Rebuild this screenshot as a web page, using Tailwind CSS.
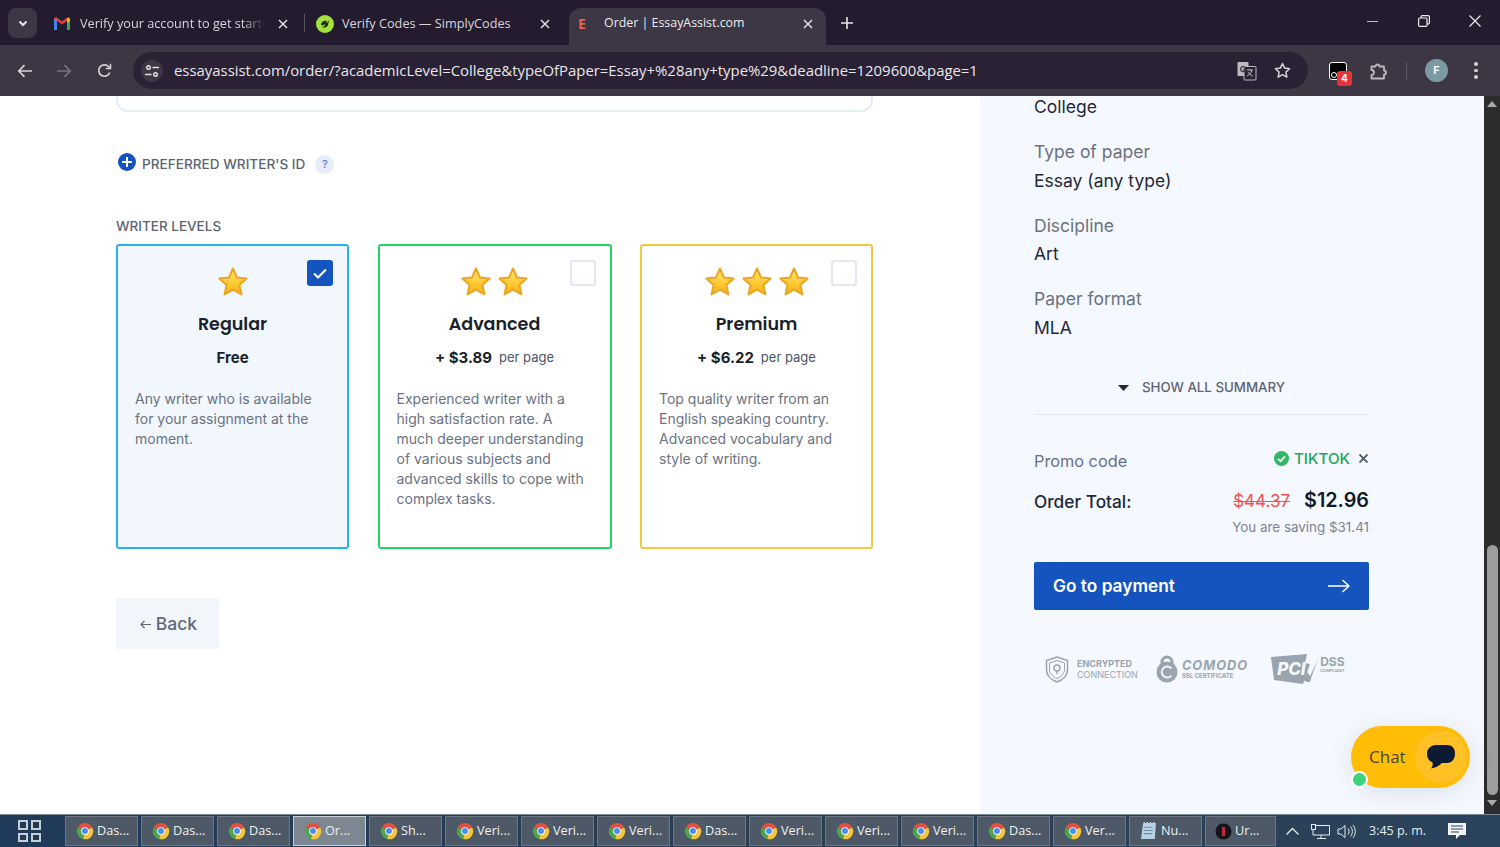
<!DOCTYPE html>
<html lang="en">
<head>
<meta charset="UTF-8">
<title>Order | EssayAssist.com</title>
<script src="https://cdn.jsdelivr.net/npm/@tailwindcss/browser@4"></script>
</head>
<body class="w-[1500px] h-[847px] overflow-hidden bg-white font-['Inter',sans-serif] flex flex-col relative">
<svg class="absolute w-0 h-0">
  <defs>
    <linearGradient id="starFill" x1="0" y1="0" x2="0" y2="1"><stop offset="0" stop-color="#ffe675"/><stop offset="0.6" stop-color="#fdc92f"/><stop offset="1" stop-color="#f4ad1f"/></linearGradient>
    <symbol id="star" viewBox="0 0 32 32"><path d="M16 2.500l4 9 9.600 1-7.200 6.500 2.100 9.500L16 23.600 7.500 28.500l2.100-9.500L2.400 12.500l9.600-1z" fill="url(#starFill)" stroke="#eca522" stroke-width="2" stroke-linejoin="round"/></symbol>
    <symbol id="chrome" viewBox="0 0 20 20">
      <path d="M10 10L2 6a9 9 0 0 1 16 0z" fill="#e2503f"/>
      <path d="M10 10L2 6a9 9 0 0 0 6 13z" fill="#4fa44f"/>
      <path d="M10 10L18 6a9 9 0 0 1-10 13z" fill="#f5c63c"/>
      <circle cx="10" cy="10" r="4.300" fill="#fff"/><circle cx="10" cy="10" r="3.300" fill="#4a8ee8"/>
    </symbol>
  </defs>
</svg>

<!-- tab strip -->
<div class="h-[45px] shrink-0 bg-[#241c2e] flex items-start text-[12.700px] font-['Open_Sans',sans-serif] text-[#d8d4dc]">
  <div class="ml-2 mt-2 w-[29px] h-[30px] rounded-lg bg-[#3c3645] flex items-center justify-center">
    <svg width="12" height="12" viewBox="0 0 12 12" fill="none" stroke="#e8e6ea" stroke-width="2"><path d="M2.500 4.500L6 8l3.500-3.500"/></svg>
  </div>
  <div class="ml-[17px] mt-[14px] flex items-center w-[250px]">
    <svg width="16" height="13" viewBox="0 0 16 13"><path d="M0 13V1.500L3 1v12z" fill="#4285f4"/><path d="M13 13V1l3 .5V13z" fill="#34a853"/><path d="M0 1.500L8 7.500l8-6L14 0 8 4.500 2 0z" fill="#ea4335"/><path d="M13 1l3 .5V4l-3 2z" fill="#fbbc05"/></svg>
    <span class="ml-[10px] w-[185px] overflow-hidden whitespace-nowrap [mask-image:linear-gradient(to_right,black_88%,transparent)]">Verify your account to get started</span>
    <svg class="ml-[13px]" width="10" height="10" viewBox="0 0 10 10" stroke="#e0dde4" stroke-width="1.500"><path d="M1 1l8 8M9 1l-8 8"/></svg>
  </div>
  <div class="mt-[14px] w-px h-[18px] bg-[#5a5463]"></div>
  <div class="ml-[11px] mt-[14px] flex items-center w-[253px]">
    <svg width="18" height="18" viewBox="0 0 18 18"><circle cx="9" cy="9" r="9" fill="#a4e13c"/><path d="M5 10c0-3 3-5 6-4-1 1-1 2 0 2l2-3-1 5c-1 3-5 3-6 2 2 0 3-1 3-3-1 1-3 2-4 1z" fill="#1d2a12"/></svg>
    <span class="ml-2 w-[190px] whitespace-nowrap">Verify Codes — SimplyCodes</span>
    <svg class="ml-[8px]" width="10" height="10" viewBox="0 0 10 10" stroke="#e0dde4" stroke-width="1.500"><path d="M1 1l8 8M9 1l-8 8"/></svg>
  </div>
  <div class="mt-2 w-[257px] h-[37px] bg-[#3c3645] rounded-t-xl flex items-center pl-[9px] pb-[6px] text-[#eeecf0]">
    <span class="w-[26px] text-[#e8644a] font-bold text-[14px]">E</span>
    <span class="w-[199px] whitespace-nowrap text-[12.400px]">Order | EssayAssist.com</span>
    <svg width="10" height="10" viewBox="0 0 10 10" stroke="#e0dde4" stroke-width="1.500"><path d="M1 1l8 8M9 1l-8 8"/></svg>
  </div>
  <svg class="ml-[15px] mt-[17px]" width="12" height="12" viewBox="0 0 12 12" stroke="#e8e6ea" stroke-width="1.600"><path d="M6 0v12M0 6h12"/></svg>
  <div class="ml-auto mt-[15px] flex items-center">
    <div class="w-[11px] h-px bg-[#c4bfcb] mr-[40px]"></div>
    <svg class="mr-[39px]" width="12" height="12" viewBox="0 0 12 12" fill="none" stroke="#eeecf0" stroke-width="1.200"><rect x="0.600" y="3" width="8.400" height="8.400" rx="1.200"/><path d="M3 3V1.800A1.200 1.200 0 0 1 4.200.6h6A1.200 1.200 0 0 1 11.400 1.800v6A1.200 1.200 0 0 1 10.200 9H9"/></svg>
    <svg class="mr-[19px]" width="12" height="12" viewBox="0 0 12 12" stroke="#eeecf0" stroke-width="1.200"><path d="M.5.500l11 11M11.500.500l-11 11"/></svg>
  </div>
</div>

<!-- toolbar -->
<div class="h-[51px] shrink-0 bg-[#3c3645] flex items-center text-[#d8d4dc]">
  <svg class="ml-[17px]" width="15" height="14" viewBox="0 0 15 14" fill="none" stroke="#d6d2da" stroke-width="1.700"><path d="M15 7H2M7.500 1.200L1.800 7l5.700 5.800"/></svg>
  <svg class="ml-[25px]" width="15" height="14" viewBox="0 0 15 14" fill="none" stroke="#787280" stroke-width="1.700"><path d="M0 7h13M7.500 1.200L13.200 7l-5.700 5.800"/></svg>
  <svg class="ml-[25px]" width="15" height="15" viewBox="0 0 15 15" fill="none" stroke="#d6d2da" stroke-width="1.700"><path d="M12.800 9.500A5.700 5.700 0 1 1 11.500 3.500L13 5"/><path d="M13.500 .8v4.700H8.800" stroke-width="1.500"/></svg>
  <div class="ml-[21px] w-[1175px] h-[37px] rounded-full bg-[#2a2234] flex items-center">
    <div class="ml-2 w-[22px] h-[22px] rounded-full bg-[#3c3645] flex items-center justify-center">
      <svg width="14" height="14" viewBox="0 0 14 14" fill="none" stroke="#e4e1e8" stroke-width="1.400"><circle cx="3.500" cy="3.500" r="1.800"/><circle cx="10.500" cy="10.500" r="1.800"/><path d="M7.500 3.500H14M0 10.500h6.500"/></svg>
    </div>
    <span class="ml-[11px] text-[14.900px] text-[#e9e6ec] font-['Open_Sans',sans-serif] whitespace-nowrap">essayassist.com/order/?academicLevel=College&amp;typeOfPaper=Essay+%28any+type%29&amp;deadline=1209600&amp;page=1</span>
    <svg class="ml-auto" width="20" height="20" viewBox="0 0 20 20"><rect x="0.500" y="1" width="11" height="14" rx="1" fill="#bdb9c2"/><rect x="7" y="5.500" width="12" height="13.500" rx="1" fill="#2a2234" stroke="#bdb9c2"/><path d="M10 9h6M13 8v1M15 9c-.5 3-3 5-5 6M11 11c1 2 3 3.500 5 4" stroke="#bdb9c2" fill="none"/><path d="M8 6.500a2.500 2.500 0 1 0 .5 2.500H6" stroke="#3c3645" stroke-width="1.300" fill="none"/></svg>
    <svg class="ml-[17px] mr-[17px]" width="17" height="17" viewBox="0 0 17 17" fill="none" stroke="#d6d2da" stroke-width="1.500" stroke-linejoin="round"><path d="M8.500 1.500l2.100 4.600 5 .6-3.700 3.400 1 5-4.400-2.500-4.400 2.500 1-5L1.400 6.700l5-.6z"/></svg>
  </div>
  <div class="ml-[21px] relative w-[18px] h-[18px] rounded-[3px] bg-black border border-white">
    <div class="absolute left-[1px] bottom-[1px] w-[6px] h-[6px] rounded-full border border-white"></div>
    <div class="absolute left-[7px] top-[8px] w-[15px] h-[15px] rounded-[3px] bg-[#e5333a] text-white text-[10px] font-bold flex items-center justify-center">4</div>
  </div>
  <svg class="ml-[23px]" width="18" height="18" viewBox="0 0 18 18" fill="none" stroke="#bdb9c2" stroke-width="1.800" stroke-linejoin="round"><path d="M1.500 4.500h4a2 2 0 0 1 4 0h4.500v4a2 2 0 0 1 0 4v4H1.500v-3.500a2 2 0 0 0 0-5z"/></svg>
  <div class="ml-[18px] w-px h-[18px] bg-[#5a5463]"></div>
  <div class="ml-[18px] w-[23px] h-[23px] rounded-full bg-[#7b9aa3] text-white text-[11px] font-semibold flex items-center justify-center">F</div>
  <div class="ml-[26px] flex flex-col gap-[3px]">
    <i class="block w-[3.500px] h-[3.500px] rounded-full bg-[#d6d2da]"></i><i class="block w-[3.500px] h-[3.500px] rounded-full bg-[#d6d2da]"></i><i class="block w-[3.500px] h-[3.500px] rounded-full bg-[#d6d2da]"></i>
  </div>
</div>

<!-- page -->
<div class="h-[718px] shrink-0 flex">
  <main class="w-[980px] pl-[116px] shrink-0">
    <div class="w-[757px]">
      <div class="h-[16px] border-2 border-t-0 border-[#e6ecf6] rounded-b-xl"></div>
      <div class="mt-[42px] ml-[2px] flex items-center h-[20px]">
        <div class="w-[18px] h-[18px] rounded-full bg-[#1554bf] flex items-center justify-center mt-[-5px]">
          <svg width="10" height="10" viewBox="0 0 10 10" stroke="#fff" stroke-width="2"><path d="M5 0v10M0 5h10"/></svg>
        </div>
        <span class="ml-[6px] text-[13.600px] text-[#5c6472] font-medium">PREFERRED WRITER'S ID</span>
        <div class="ml-[10px] w-[19px] h-[19px] rounded-full bg-[#e6ecfa] text-[#5a7ec4] text-[11px] font-medium flex items-center justify-center">?</div>
      </div>
      <div class="mt-[42px] h-[20px] flex items-center text-[13.500px] text-[#5c6472] font-medium">WRITER LEVELS</div>
      <div class="mt-[8px] flex justify-between">
        <!-- regular -->
        <div class="relative w-[233px] h-[305px] rounded-[3px] border-2 border-[#25b3f0] bg-[#f2f7fe] flex flex-col items-center">
          <div class="absolute right-[14px] top-[14px] w-[26px] h-[26px] rounded-[3px] bg-[#1554bf] flex items-center justify-center">
            <svg width="14" height="11" viewBox="0 0 14 11" fill="none" stroke="#fff" stroke-width="2"><path d="M1 5.500l4 4 8-8"/></svg>
          </div>
          <div class="mt-[20px] flex h-[32px] gap-[5px]"><svg class="w-[32px] h-[32px]"><use href="#star"/></svg></div>
          <div class="mt-[11px] h-[30px] flex items-center font-['Poppins','Lato',sans-serif] text-[17.500px] font-semibold text-[#1a1f2b]">Regular</div>
          <div class="mt-[7px] h-[24px] flex items-center text-[15px] font-bold text-[#1a1f2b]">Free</div>
          <p class="mt-[19px] self-start px-[17px] text-[14px] leading-[20px] text-[#6b7280]">Any writer who is available for your assignment at the moment.</p>
        </div>
        <!-- advanced -->
        <div class="relative w-[234px] h-[305px] rounded-[3px] border-2 border-[#24d366] bg-white flex flex-col items-center">
          <div class="absolute right-[14px] top-[14px] w-[26px] h-[26px] rounded-[3px] border-2 border-[#e3e7ef] bg-white"></div>
          <div class="mt-[20px] flex h-[32px] gap-[5px]"><svg class="w-[32px] h-[32px]"><use href="#star"/></svg><svg class="w-[32px] h-[32px]"><use href="#star"/></svg></div>
          <div class="mt-[11px] h-[30px] flex items-center font-['Poppins','Lato',sans-serif] text-[17.500px] font-semibold text-[#1a1f2b]">Advanced</div>
          <div class="mt-[7px] h-[24px] flex items-center text-[15px] font-bold text-[#1a1f2b]">+ $3.89<span class="ml-[7px] text-[13px] font-normal text-[#4b5563]">per page</span></div>
          <p class="mt-[19px] self-start px-[17px] text-[14px] leading-[20px] text-[#6b7280]">Experienced writer with a high satisfaction rate. A much deeper understanding of various subjects and advanced skills to cope with complex tasks.</p>
        </div>
        <!-- premium -->
        <div class="relative w-[233px] h-[305px] rounded-[3px] border-2 border-[#f3c843] bg-white flex flex-col items-center">
          <div class="absolute right-[14px] top-[14px] w-[26px] h-[26px] rounded-[3px] border-2 border-[#e3e7ef] bg-white"></div>
          <div class="mt-[20px] flex h-[32px] gap-[5px]"><svg class="w-[32px] h-[32px]"><use href="#star"/></svg><svg class="w-[32px] h-[32px]"><use href="#star"/></svg><svg class="w-[32px] h-[32px]"><use href="#star"/></svg></div>
          <div class="mt-[11px] h-[30px] flex items-center font-['Poppins','Lato',sans-serif] text-[17.500px] font-semibold text-[#1a1f2b]">Premium</div>
          <div class="mt-[7px] h-[24px] flex items-center text-[15px] font-bold text-[#1a1f2b]">+ $6.22<span class="ml-[7px] text-[13px] font-normal text-[#4b5563]">per page</span></div>
          <p class="mt-[19px] self-start px-[17px] text-[14px] leading-[20px] text-[#6b7280]">Top quality writer from an English speaking country. Advanced vocabulary and style of writing.</p>
        </div>
      </div>
      <div class="mt-[49px] w-[103px] h-[51px] pt-[2px] pl-[2px] rounded-[3px] bg-[#f2f6fb] flex items-center justify-center text-[17.500px] font-medium text-[#5c6a7d]">
        <svg class="mr-[5px]" width="11" height="9" viewBox="0 0 11 9" fill="none" stroke="#5c6a7d" stroke-width="1.200"><path d="M11 4.500H1.500M4.500 1L1 4.500 4.500 8"/></svg>Back
      </div>
    </div>
  </main>

  <aside class="w-[504px] shrink-0 bg-[#f5f8fe] pl-[54px] overflow-hidden">
    <div class="w-[335px] text-[17.500px]">
      <div class="h-[23px] flex items-center text-[#1f2937]">College</div>
      <div class="mt-[19px] h-[28px] flex items-center text-[#6b7280]">Type of paper</div>
      <div class="mt-[1px] h-[29px] flex items-center text-[#1f2937]">Essay (any type)</div>
      <div class="mt-[16px] h-[28px] flex items-center text-[#6b7280]">Discipline</div>
      <div class="h-[29px] flex items-center text-[#1f2937]">Art</div>
      <div class="mt-[16px] h-[28px] flex items-center text-[#6b7280]">Paper format</div>
      <div class="mt-[1px] h-[29px] flex items-center text-[#1f2937]">MLA</div>
      <div class="mt-[35px] h-[20px] flex items-center justify-center text-[13.300px] font-medium text-[#5c6472]">
        <svg class="mr-[13px]" width="11" height="6" viewBox="0 0 11 6"><path d="M0 0h11L5.500 6z" fill="#1f2937"/></svg>SHOW ALL SUMMARY
      </div>
      <div class="mt-[16px] h-px bg-[#e3e7ee]"></div>
      <div class="mt-[33px] flex justify-between items-center h-[26px]">
        <span class="text-[16.300px] text-[#667085]">Promo code</span>
        <div class="flex items-center mt-[-4px]">
          <svg width="15" height="15" viewBox="0 0 15 15"><circle cx="7.500" cy="7.500" r="7.500" fill="#2fb861"/><path d="M4 7.800l2.500 2.400L11 5.300" fill="none" stroke="#fff" stroke-width="1.800"/></svg>
          <span class="ml-[5px] text-[15.200px] font-medium text-[#22a552]">TIKTOK</span>
          <svg class="ml-[9px] mr-[1px]" width="9" height="9" viewBox="0 0 9 9" stroke="#4b5563" stroke-width="1.800"><path d="M.5.500l8 8M8.500.500l-8 8"/></svg>
        </div>
      </div>
      <div class="mt-[14px] flex justify-between items-center h-[28px]">
        <span class="text-[17.300px] font-medium text-[#1f2937]">Order Total:</span>
        <div class="flex items-center">
          <span class="text-[17px] text-[#f0524f] line-through">$44.37</span>
          <span class="ml-[14px] text-[19.800px] font-semibold text-[#111827] mt-[-2px]">$12.96</span>
        </div>
      </div>
      <div class="mt-[1px] h-[20px] flex items-center justify-end text-[13.400px] text-[#7b8494]">You are saving $31.41</div>
      <div class="mt-[25px] h-[48px] rounded-[2px] bg-[#1554bf] flex items-center justify-between pl-[19px] pr-[19px] text-white text-[17.300px] font-semibold">
        <span>Go to payment</span>
        <svg width="22" height="14" viewBox="0 0 22 14" fill="none" stroke="#fff" stroke-width="1.500"><path d="M0 7h21M14.500 1l6.500 6-6.500 6"/></svg>
      </div>
      <div class="mt-[39px] flex items-center h-[32px] text-[#9aa4ae] pt-[8px]">
        <svg class="ml-[11px]" width="24" height="27" viewBox="0 0 24 27" fill="none" stroke="#9aa4ae" stroke-width="1.500"><path d="M12 1l10.500 3.500v9c0 6-5 10.500-10.500 12.500C6.500 24 1.500 19.500 1.500 13.500v-9z"/><path d="M12 4.500l7.500 2.500v6.500c0 4-3.500 7.500-7.500 9-4-1.500-7.500-5-7.500-9V7z" stroke-width="1"/><circle cx="12" cy="12" r="3"/><path d="M12 15v3"/></svg>
        <div class="ml-[8px] flex flex-col text-[9px] leading-[11px]"><span class="font-bold">ENCRYPTED</span><span>CONNECTION</span></div>
        <svg class="ml-[17px]" width="24" height="28" viewBox="0 0 24 28" fill="none"><path d="M7 10V7a5 5 0 0 1 10 0v3" stroke="#9aa4ae" stroke-width="3"/><circle cx="12" cy="17" r="10.500" fill="#9aa4ae"/><path d="M16.500 13.500a5.500 5.500 0 1 0 0 7" stroke="#f5f8fe" stroke-width="1.800"/></svg>
        <div class="ml-[3px] flex flex-col items-start"><span class="text-[12.800px] leading-[13px] font-bold italic tracking-[1px]">COMODO</span><span class="text-[6px] leading-[7px] font-bold">SSL CERTIFICATE</span></div>
        <div class="ml-[23px] relative w-[75px] h-[30px]">
          <svg class="absolute left-0 top-0" width="50" height="30" viewBox="0 0 50 30"><path d="M0 3l36-3-2 9 5 1-7 20L3 26z" fill="#9aa4ae"/><path d="M32 26l4-8 3 4 9-18c-4 9-7 16-9 24h-3z" fill="#9aa4ae"/></svg>
          <span class="absolute left-[6px] top-[5px] text-[17px] leading-[20px] font-extrabold italic text-[#f5f8fe]">PCI</span>
          <span class="absolute left-[49px] top-[1px] text-[12px] leading-[13px] font-bold">DSS</span>
          <span class="absolute left-[49px] top-[14px] text-[4px] leading-[5px] font-bold">COMPLIANT</span>
        </div>
      </div>
    </div>
  </aside>

  <!-- scrollbar -->
  <div class="w-[16px] shrink-0 bg-[#2c2b2e] flex flex-col items-center">
    <svg class="mt-[5px]" width="10" height="6" viewBox="0 0 10 6"><path d="M5 0l5 6H0z" fill="#a9a9a9"/></svg>
    <div class="mt-[438px] w-[11px] h-[250px] rounded-full bg-[#9d9d9d]"></div>
    <svg class="mt-[5px]" width="10" height="6" viewBox="0 0 10 6"><path d="M5 6L0 0h10z" fill="#a9a9a9"/></svg>
  </div>
</div>

<!-- chat launcher -->
<div class="absolute left-[1351px] top-[726px] w-[119px] h-[62px] rounded-full bg-[#ffbd08] shadow-[0_4px_24px_rgba(30,50,90,0.12)] flex items-center pl-[18px]">
  <span class="text-[17px] text-[#4b4327] font-['Open_Sans',sans-serif]">Chat</span>
  <div class="absolute right-[3px] top-[5px] w-[52px] h-[52px] rounded-full bg-[#ffc126] flex items-center justify-center">
    <svg width="28" height="25" viewBox="0 0 28 25"><path d="M9 0h11c5 0 8 3 8 8.500S25 18 20 18h-5c-3 3-7 5-11 5.500 1.500-1.500 2-3.500 1.500-6C2 16 0 13 0 9 0 3.500 4 0 9 0z" fill="#0d1a33"/></svg>
  </div>
  <div class="absolute left-[0px] top-[45px] w-[17px] h-[17px] rounded-full bg-[#3fd47c] border-2 border-white"></div>
</div>

<!-- taskbar -->
<div class="h-[33px] shrink-0 bg-gradient-to-r from-[#1f3a5a] via-[#2b3d50] to-[#2a435c] border-t border-[#7d8894] flex items-center text-white text-[12.700px] font-['Open_Sans',sans-serif]">
  <div class="ml-[18px] w-[23px] h-[22px] grid grid-cols-2 gap-[3px]">
    <i class="block border-2 border-[#c9ced4]"></i><i class="block border-2 border-[#c9ced4]"></i><i class="block border-2 border-[#c9ced4]"></i><i class="block border-2 border-[#c9ced4]"></i>
  </div>
  <div class="ml-[24px] flex gap-[3px] text-[#eef1f4]">
    <div class="w-[73px] h-[30px] bg-[#4d5966] border border-[#6c7783] flex items-center pl-[10px] gap-[3px]"><svg class="w-[18px] h-[18px]"><use href="#chrome"/></svg>Das...</div>
    <div class="w-[73px] h-[30px] bg-[#4d5966] border border-[#6c7783] flex items-center pl-[10px] gap-[3px]"><svg class="w-[18px] h-[18px]"><use href="#chrome"/></svg>Das...</div>
    <div class="w-[73px] h-[30px] bg-[#4d5966] border border-[#6c7783] flex items-center pl-[10px] gap-[3px]"><svg class="w-[18px] h-[18px]"><use href="#chrome"/></svg>Das...</div>
    <div class="w-[73px] h-[30px] bg-[#7c8791] border border-[#c9d0d6] flex items-center pl-[10px] gap-[3px]"><svg class="w-[18px] h-[18px]"><use href="#chrome"/></svg>Or...</div>
    <div class="w-[73px] h-[30px] bg-[#4d5966] border border-[#6c7783] flex items-center pl-[10px] gap-[3px]"><svg class="w-[18px] h-[18px]"><use href="#chrome"/></svg>Sh...</div>
    <div class="w-[73px] h-[30px] bg-[#4d5966] border border-[#6c7783] flex items-center pl-[10px] gap-[3px]"><svg class="w-[18px] h-[18px]"><use href="#chrome"/></svg>Veri...</div>
    <div class="w-[73px] h-[30px] bg-[#4d5966] border border-[#6c7783] flex items-center pl-[10px] gap-[3px]"><svg class="w-[18px] h-[18px]"><use href="#chrome"/></svg>Veri...</div>
    <div class="w-[73px] h-[30px] bg-[#4d5966] border border-[#6c7783] flex items-center pl-[10px] gap-[3px]"><svg class="w-[18px] h-[18px]"><use href="#chrome"/></svg>Veri...</div>
    <div class="w-[73px] h-[30px] bg-[#4d5966] border border-[#6c7783] flex items-center pl-[10px] gap-[3px]"><svg class="w-[18px] h-[18px]"><use href="#chrome"/></svg>Das...</div>
    <div class="w-[73px] h-[30px] bg-[#4d5966] border border-[#6c7783] flex items-center pl-[10px] gap-[3px]"><svg class="w-[18px] h-[18px]"><use href="#chrome"/></svg>Veri...</div>
    <div class="w-[73px] h-[30px] bg-[#4d5966] border border-[#6c7783] flex items-center pl-[10px] gap-[3px]"><svg class="w-[18px] h-[18px]"><use href="#chrome"/></svg>Veri...</div>
    <div class="w-[73px] h-[30px] bg-[#4d5966] border border-[#6c7783] flex items-center pl-[10px] gap-[3px]"><svg class="w-[18px] h-[18px]"><use href="#chrome"/></svg>Veri...</div>
    <div class="w-[73px] h-[30px] bg-[#4d5966] border border-[#6c7783] flex items-center pl-[10px] gap-[3px]"><svg class="w-[18px] h-[18px]"><use href="#chrome"/></svg>Das...</div>
    <div class="w-[73px] h-[30px] bg-[#4d5966] border border-[#6c7783] flex items-center pl-[10px] gap-[3px]"><svg class="w-[18px] h-[18px]"><use href="#chrome"/></svg>Ver...</div>
    <div class="w-[73px] h-[30px] bg-[#4d5966] border border-[#6c7783] flex items-center pl-[10px] gap-[3px]"><svg width="18" height="18" viewBox="0 0 17 17"><path d="M3 1h12l-1 15H1z" fill="#b9d3e6"/><path d="M4 1v-1M7 1v-1M10 1v-1M13 1v-1" stroke="#e9eef2"/><path d="M4 5h8M4 8h8M3.500 11h8" stroke="#6d8ba3"/></svg>Nu...</div>
    <div class="w-[71px] h-[30px] bg-[#4d5966] border border-[#6c7783] flex items-center pl-[9px] gap-[3px]"><svg width="17" height="17" viewBox="0 0 17 17"><circle cx="8.500" cy="8.500" r="8" fill="#17131a"/><rect x="7" y="4" width="3" height="9" fill="#c9243f"/></svg>Ur...</div>
  </div>
  <svg class="ml-[10px]" width="13" height="8" viewBox="0 0 13 8" fill="none" stroke="#e8ebee" stroke-width="1.300"><path d="M.5 7.500l6-6 6 6"/></svg>
  <svg class="ml-[12px]" width="19" height="15" viewBox="0 0 19 15" fill="none" stroke="#e8ebee"><path d="M4 1.500h14.500v9.500H2V6M10 11v3M6 14.500h9"/><rect x=".5" y=".5" width="4" height="5"/></svg>
  <svg class="ml-[7px]" width="19" height="15" viewBox="0 0 19 15" fill="none" stroke="#e8ebee"><path d="M1 5v5h3l4 3.500v-12L4 5zM11 4.500c1.500 2 1.500 4 0 6M13.500 2.500c2.500 3 2.500 7 0 10M16 1c3 4 3 9 0 13"/></svg>
  <span class="ml-[13px] text-[12.500px] text-[#e8ebee] whitespace-nowrap">3:45 p. m.</span>
  <svg class="ml-[22px]" width="19" height="17" viewBox="0 0 19 17"><path d="M0 0h18v12h-6l-4 4v-4H0z" fill="#f2f4f6"/><path d="M3 3h12M3 6h12M3 9h8" stroke="#2a435c"/></svg>
</div>
</body>
</html>
